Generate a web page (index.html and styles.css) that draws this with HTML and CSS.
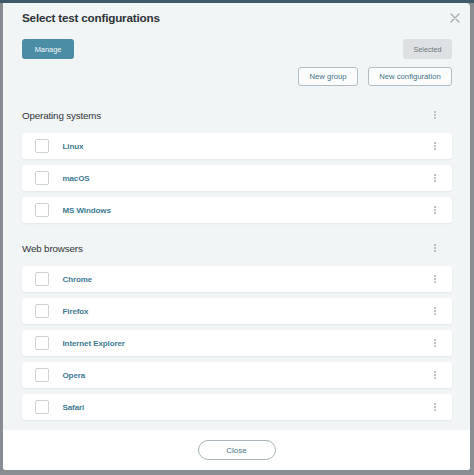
FILE: index.html
```html
<!DOCTYPE html>
<html lang="en">
<head>
<meta charset="utf-8">
<title>Select test configurations</title>
<link rel="stylesheet" href="styles.css">
</head>
<body>
<div class="backdrop">
  <div class="modal">
    <div class="head">
      <div class="title-row">
        <h1 class="title">Select test configurations</h1>
        <button class="close-x" aria-label="Close">
          <svg width="10" height="10" viewBox="0 0 10 10"><path d="M1 1L9 9M9 1L1 9" stroke="#9fa9ae" stroke-width="1.2" fill="none" stroke-linecap="round"/></svg>
        </button>
      </div>
      <div class="toolbar">
        <button class="btn btn-primary">Manage</button>
        <button class="btn btn-muted">Selected</button>
      </div>
      <div class="toolbar toolbar-end">
        <button class="btn btn-outline">New group</button>
        <button class="btn btn-outline">New configuration</button>
      </div>
    </div>
    <div class="content">
      <section class="group">
        <div class="group-head">
          <h2 class="group-title">Operating systems</h2>
          <span class="kebab"><i></i><i></i><i></i></span>
        </div>
        <div class="rows">
          <div class="row"><span class="check"></span><span class="label">Linux</span><span class="kebab"><i></i><i></i><i></i></span></div>
          <div class="row"><span class="check"></span><span class="label">macOS</span><span class="kebab"><i></i><i></i><i></i></span></div>
          <div class="row"><span class="check"></span><span class="label">MS Windows</span><span class="kebab"><i></i><i></i><i></i></span></div>
        </div>
      </section>
      <section class="group group-second">
        <div class="group-head">
          <h2 class="group-title">Web browsers</h2>
          <span class="kebab"><i></i><i></i><i></i></span>
        </div>
        <div class="rows">
          <div class="row"><span class="check"></span><span class="label">Chrome</span><span class="kebab"><i></i><i></i><i></i></span></div>
          <div class="row"><span class="check"></span><span class="label">Firefox</span><span class="kebab"><i></i><i></i><i></i></span></div>
          <div class="row"><span class="check"></span><span class="label">Internet Explorer</span><span class="kebab"><i></i><i></i><i></i></span></div>
          <div class="row"><span class="check"></span><span class="label">Opera</span><span class="kebab"><i></i><i></i><i></i></span></div>
          <div class="row"><span class="check"></span><span class="label">Safari</span><span class="kebab"><i></i><i></i><i></i></span></div>
        </div>
      </section>
    </div>
    <div class="footer">
      <button class="btn btn-pill">Close</button>
    </div>
  </div>
</div>
</body>
</html>
```
FILE: styles.css
```css
* { box-sizing: border-box; }
html, body { margin: 0; padding: 0; }
body {
  font-family: "Liberation Sans", Arial, sans-serif;
  background: #868c8f;
}
.backdrop {
  width: 474px;
  height: 475px;
  padding: 0 4px 5px 3px;
  border-top: 3px solid #3d5c67;
  background: #878d90;
  display: flex;
}
.modal {
  flex: 1;
  display: flex;
  flex-direction: column;
  background: #f2f5f6;
  border-radius: 0 4px 3px 3px;
  overflow: hidden;
}
.head {
  padding: 0 18px 0 19px;
}
.title-row {
  height: 29px;
  display: flex;
  align-items: center;
  justify-content: space-between;
}
.title {
  margin: 0;
  font-size: 11.7px;
  font-weight: bold;
  letter-spacing: -0.2px;
  color: #2e3337;
}
.close-x {
  border: 0;
  background: none;
  padding: 0;
  margin-right: -8px;
  width: 10px;
  height: 10px;
  display: flex;
}
.toolbar {
  display: flex;
  justify-content: space-between;
  margin-top: 7px;
}
.toolbar-end {
  justify-content: flex-end;
  gap: 10px;
  margin-top: 8px;
}
.btn {
  font-family: inherit;
  border-radius: 3px;
  padding: 0;
  cursor: pointer;
}
.btn-primary {
  width: 52px;
  height: 20px;
  border: 0;
  background: #4a8da5;
  color: #f4f8fa;
  font-size: 7.4px;
}
.btn-muted {
  width: 49px;
  height: 20px;
  border: 0;
  background: #dde1e4;
  color: #6c7479;
  font-size: 7.2px;
}
.btn-outline {
  height: 19px;
  border: 1px solid #b4bdc2;
  background: #fbfcfc;
  color: #3f7388;
  font-size: 7.7px;
}
.btn-outline:first-child { width: 60px; }
.btn-outline:last-child { width: 84px; }
.content {
  flex: 1;
  padding: 17px 18px 9px 19px;
}
.group-head {
  height: 24px;
  display: flex;
  align-items: center;
  justify-content: space-between;
  padding-right: 15px;
}
.group-title {
  margin: 0;
  font-size: 9.8px;
  font-weight: normal;
  letter-spacing: -0.15px;
  color: #2f3437;
}
.group-second { margin-top: 13px; }
.rows {
  display: flex;
  flex-direction: column;
  gap: 6px;
  margin-top: 6px;
}
.row {
  height: 26px;
  background: #ffffff;
  border-radius: 3px;
  box-shadow: 0 1px 2px rgba(40, 60, 70, 0.07);
  display: flex;
  align-items: center;
  padding: 0 15px 0 13px;
}
.check {
  width: 13.5px;
  height: 13.5px;
  border: 1px solid #cbd1d4;
  border-radius: 2px;
  background: #fff;
  flex: none;
}
.label {
  margin-left: 14px;
  flex: 1;
  font-size: 8px;
  font-weight: bold;
  letter-spacing: -0.1px;
  color: #3d7b93;
}
.kebab {
  display: flex;
  flex-direction: column;
  gap: 1.6px;
  width: 4px;
  align-items: center;
}
.kebab i {
  display: block;
  width: 1.5px;
  height: 1.5px;
  border-radius: 50%;
  background: #b3b8bb;
}
.footer {
  height: 40px;
  background: #ffffff;
  display: flex;
  align-items: center;
  justify-content: center;
}
.btn-pill {
  width: 78px;
  height: 20px;
  border: 1px solid #a9b3b8;
  border-radius: 10px;
  background: #fff;
  color: #3f7388;
  font-size: 8px;
}
```
